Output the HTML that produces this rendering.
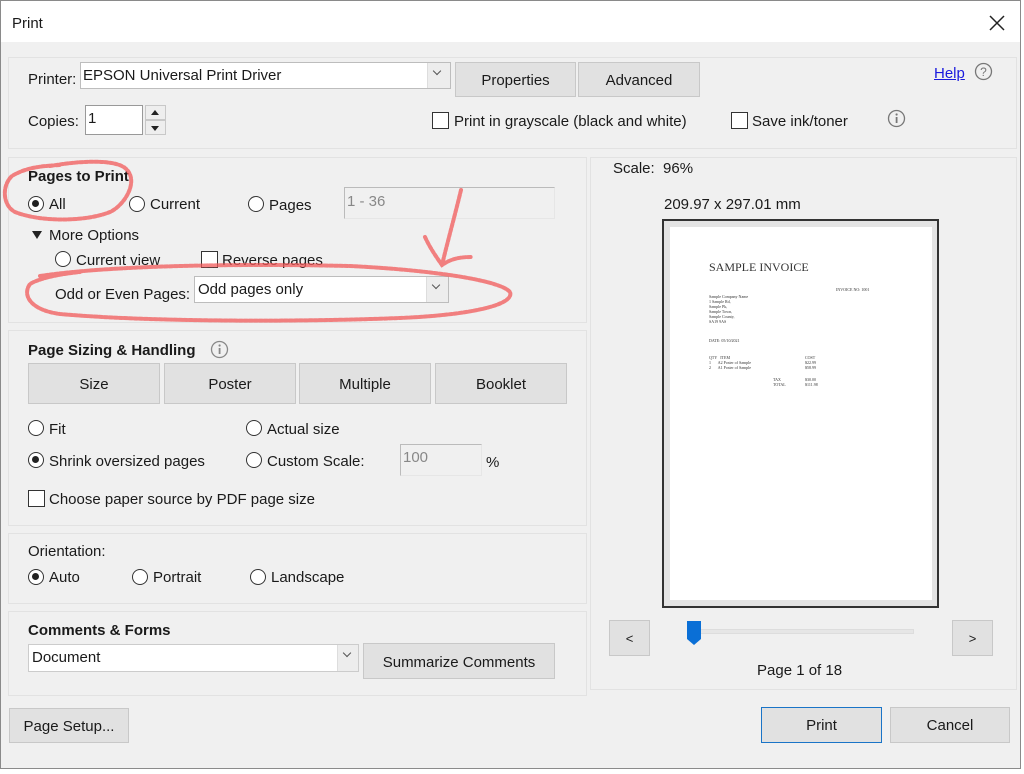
<!DOCTYPE html>
<html><head><meta charset="utf-8"><style>
*{box-sizing:border-box;margin:0;padding:0}
body{width:1024px;height:774px;background:#fff;position:relative;overflow:hidden;font-family:"Liberation Sans",sans-serif;font-size:15px;color:#1a1a1a;line-height:21px}
.a{position:absolute}
.win{left:0;top:0;width:1021px;height:769px;background:#f0f0f0;border:1px solid #8a8a8a}
.title{left:1px;top:1px;width:1019px;height:41px;background:#fff}
.panel{border:1px solid #e2e2e2;background:#f0f0f0}
.btn{background:#e1e1e1;border:1px solid #c8c8c8;text-align:center;color:#1a1a1a}
.inp{background:#fff;border:1px solid #bdbdbd}
.radio{width:16px;height:16px;border:1.5px solid #333;border-radius:50%;background:#fff}
.radio.on::after{content:"";position:absolute;left:3px;top:3px;width:7px;height:7px;border-radius:50%;background:#222}
.chk{width:17px;height:17px;border:1.5px solid #333;background:#fff}
.b{font-weight:bold}
.dd{background:#ededed;border-left:1px solid #ddd}
.dd::after{content:"";position:absolute;left:6px;top:5px;width:5px;height:5px;border-right:1px solid #555;border-bottom:1px solid #555;transform:rotate(45deg)}
</style></head><body>
<div class="a win"></div>
<div class="a title"></div>
<div class="a" style="left:12px;top:13px;font-size:15px">Print</div>
<svg class="a" style="left:989px;top:15px" width="16" height="16"><path d="M1 1L15 15M15 1L1 15" stroke="#222" stroke-width="1.5"/></svg>

<div class="a panel" style="left:8px;top:57px;width:1009px;height:92px"></div>
<div class="a" style="left:28px;top:69px">Printer:</div>
<div class="a inp" style="left:80px;top:62px;width:371px;height:27px"></div>
<div class="a" style="left:83px;top:65px">EPSON Universal Print Driver</div>
<div class="a dd" style="left:427px;top:63px;width:23px;height:25px"></div>
<div class="a btn" style="left:455px;top:62px;width:121px;height:35px;line-height:35px">Properties</div>
<div class="a btn" style="left:578px;top:62px;width:122px;height:35px;line-height:35px">Advanced</div>
<div class="a" style="left:934px;top:63px;color:#1a1add;text-decoration:underline">Help</div>
<svg class="a" style="left:974px;top:62px" width="19" height="19"><circle cx="9.5" cy="9.5" r="8" fill="none" stroke="#777" stroke-width="1.3"/><text x="9.5" y="14" font-size="12" text-anchor="middle" fill="#777" font-family="Liberation Sans">?</text></svg>
<div class="a" style="left:28px;top:111px">Copies:</div>
<div class="a inp" style="left:85px;top:105px;width:58px;height:30px;border-color:#999"></div>
<div class="a" style="left:88px;top:108px">1</div>
<div class="a btn" style="left:145px;top:105px;width:21px;height:15px;background:#eee"></div>
<div class="a btn" style="left:145px;top:120px;width:21px;height:15px;background:#eee"></div>
<div class="a" style="left:151px;top:110px;width:0;height:0;border-left:4px solid transparent;border-right:4px solid transparent;border-bottom:5px solid #222"></div>
<div class="a" style="left:151px;top:126px;width:0;height:0;border-left:4px solid transparent;border-right:4px solid transparent;border-top:5px solid #222"></div>
<div class="a chk" style="left:432px;top:112px"></div>
<div class="a" style="left:454px;top:111px">Print in grayscale (black and white)</div>
<div class="a chk" style="left:731px;top:112px"></div>
<div class="a" style="left:752px;top:111px">Save ink/toner</div>
<svg class="a" style="left:887px;top:109px" width="19" height="19"><circle cx="9.5" cy="9.5" r="8" fill="none" stroke="#777" stroke-width="1.3"/><rect x="8.7" y="8" width="1.8" height="6" fill="#777"/><circle cx="9.6" cy="5.5" r="1.1" fill="#777"/></svg>

<div class="a panel" style="left:8px;top:157px;width:579px;height:166px"></div>
<div class="a b" style="left:28px;top:166px">Pages to Print</div>
<div class="a radio on" style="left:28px;top:196px"></div><div class="a" style="left:49px;top:194px">All</div>
<div class="a radio" style="left:129px;top:196px"></div><div class="a" style="left:150px;top:194px">Current</div>
<div class="a radio" style="left:248px;top:196px"></div><div class="a" style="left:269px;top:195px">Pages</div>
<div class="a" style="left:344px;top:187px;width:211px;height:32px;border:1px solid #bbb;border-right-color:#e6e6e6;border-bottom-color:#e6e6e6;background:#f0f0f0"></div>
<div class="a" style="left:347px;top:191px;color:#888">1 - 36</div>
<div class="a" style="left:32px;top:231px;width:0;height:0;border-left:5px solid transparent;border-right:5px solid transparent;border-top:8px solid #222"></div>
<div class="a" style="left:49px;top:225px">More Options</div>
<div class="a radio" style="left:55px;top:251px"></div><div class="a" style="left:76px;top:250px">Current view</div>
<div class="a chk" style="left:201px;top:251px"></div><div class="a" style="left:222px;top:250px">Reverse pages</div>
<div class="a" style="left:55px;top:284px">Odd or Even Pages:</div>
<div class="a inp" style="left:194px;top:276px;width:255px;height:27px"></div>
<div class="a" style="left:198px;top:279px">Odd pages only</div>
<div class="a dd" style="left:426px;top:277px;width:22px;height:25px"></div>

<div class="a panel" style="left:8px;top:330px;width:579px;height:196px"></div>
<div class="a b" style="left:28px;top:340px">Page Sizing &amp; Handling</div>
<svg class="a" style="left:210px;top:340px" width="19" height="19"><circle cx="9.5" cy="9.5" r="8" fill="none" stroke="#888" stroke-width="1.3"/><rect x="8.7" y="8" width="1.8" height="6" fill="#888"/><circle cx="9.6" cy="5.5" r="1.1" fill="#888"/></svg>
<div class="a btn" style="left:28px;top:363px;width:132px;height:41px;line-height:42px">Size</div>
<div class="a btn" style="left:164px;top:363px;width:132px;height:41px;line-height:42px">Poster</div>
<div class="a btn" style="left:299px;top:363px;width:132px;height:41px;line-height:42px">Multiple</div>
<div class="a btn" style="left:435px;top:363px;width:132px;height:41px;line-height:42px">Booklet</div>
<div class="a radio" style="left:28px;top:420px"></div><div class="a" style="left:49px;top:419px">Fit</div>
<div class="a radio" style="left:246px;top:420px"></div><div class="a" style="left:267px;top:419px">Actual size</div>
<div class="a radio on" style="left:28px;top:452px"></div><div class="a" style="left:49px;top:451px">Shrink oversized pages</div>
<div class="a radio" style="left:246px;top:452px"></div><div class="a" style="left:267px;top:451px">Custom Scale:</div>
<div class="a" style="left:400px;top:444px;width:82px;height:32px;border:1px solid #bbb;border-right-color:#e6e6e6;border-bottom-color:#e6e6e6"></div>
<div class="a" style="left:403px;top:447px;color:#888">100</div>
<div class="a" style="left:486px;top:452px">%</div>
<div class="a chk" style="left:28px;top:490px"></div><div class="a" style="left:49px;top:489px">Choose paper source by PDF page size</div>

<div class="a panel" style="left:8px;top:533px;width:579px;height:71px"></div>
<div class="a" style="left:28px;top:541px">Orientation:</div>
<div class="a radio on" style="left:28px;top:569px"></div><div class="a" style="left:49px;top:567px">Auto</div>
<div class="a radio" style="left:132px;top:569px"></div><div class="a" style="left:153px;top:567px">Portrait</div>
<div class="a radio" style="left:250px;top:569px"></div><div class="a" style="left:271px;top:567px">Landscape</div>

<div class="a panel" style="left:8px;top:611px;width:579px;height:85px"></div>
<div class="a b" style="left:28px;top:620px">Comments &amp; Forms</div>
<div class="a inp" style="left:28px;top:644px;width:331px;height:28px;border-color:#ccc"></div>
<div class="a" style="left:32px;top:647px">Document</div>
<div class="a dd" style="left:337px;top:645px;width:21px;height:26px"></div>
<div class="a btn" style="left:363px;top:643px;width:192px;height:36px;line-height:38px">Summarize Comments</div>

<div class="a panel" style="left:590px;top:157px;width:427px;height:533px"></div>
<div class="a" style="left:613px;top:158px">Scale:&nbsp; 96%</div>
<div class="a" style="left:664px;top:194px">209.97 x 297.01 mm</div>
<div class="a" style="left:662px;top:219px;width:277px;height:389px;border:2px solid #333;background:#e4e4e4"></div>
<div class="a" style="left:670px;top:227px;width:262px;height:373px;background:#fff;font-family:'Liberation Serif',serif;color:#333;line-height:normal">
<div class="a" style="left:39px;top:33px;font-size:12px">SAMPLE INVOICE</div>
<div class="a" style="left:166px;top:60px;font-size:4px">INVOICE NO: 1001</div>
<div class="a" style="left:39px;top:67px;font-size:4px;line-height:5px">Sample Company Name<br>1 Sample Rd,<br>Sample Pk,<br>Sample Town,<br>Sample County,<br>SA19 9AS</div>
<div class="a" style="left:39px;top:111px;font-size:4px">DATE: 05/10/2021</div>
<div class="a" style="left:39px;top:128px;font-size:4px;line-height:5px">QTY&nbsp;&nbsp; ITEM<br>1&nbsp;&nbsp;&nbsp;&nbsp;&nbsp;&nbsp; A2 Poster of Sample<br>2&nbsp;&nbsp;&nbsp;&nbsp;&nbsp;&nbsp; A1 Poster of Sample</div>
<div class="a" style="left:135px;top:128px;font-size:4px;line-height:5px">COST<br>$22.99<br>$58.99</div>
<div class="a" style="left:103px;top:150px;font-size:4px;line-height:5px">TAX<br>TOTAL</div>
<div class="a" style="left:135px;top:150px;font-size:4px;line-height:5px">$30.00<br>$111.98</div>
</div>
<div class="a btn" style="left:609px;top:620px;width:41px;height:36px;line-height:36px;font-size:13px">&lt;</div>
<div class="a" style="left:690px;top:629px;width:224px;height:5px;background:#e6e6e6;border:1px solid #ddd"></div>
<svg class="a" style="left:686px;top:620px" width="16" height="26"><path d="M1 1H15V19L8 25L1 19Z" fill="#0a6fd6"/></svg>
<div class="a btn" style="left:952px;top:620px;width:41px;height:36px;line-height:36px;font-size:13px">&gt;</div>
<div class="a" style="left:757px;top:660px">Page 1 of 18</div>

<div class="a btn" style="left:9px;top:708px;width:120px;height:35px;line-height:35px">Page Setup...</div>
<div class="a btn" style="left:761px;top:707px;width:121px;height:36px;line-height:36px;border:1.5px solid #1a74c7">Print</div>
<div class="a btn" style="left:890px;top:707px;width:120px;height:36px;line-height:36px">Cancel</div>

<svg class="a" style="left:0;top:0" width="1024" height="774">
<g fill="none" stroke="#f25a5a" stroke-opacity="0.75" stroke-width="4" stroke-linecap="round" stroke-dasharray="3 2">
<path d="M50 166C85 160 115 160 125 168C140 180 125 205 110 212C85 222 40 222 15 212C2 205 2 185 12 176C25 168 40 166 60 165"/>
<path d="M40 276C120 264 260 264 350 266C430 270 500 280 510 292C515 305 470 315 400 318C300 322 150 322 60 314C30 310 22 295 30 284C40 278 60 274 80 272"/>
<path d="M461 190C455 215 448 240 442 265M425 237C430 248 437 258 442 265C452 258 462 257 472 257"/>
</g></svg>
</body></html>
